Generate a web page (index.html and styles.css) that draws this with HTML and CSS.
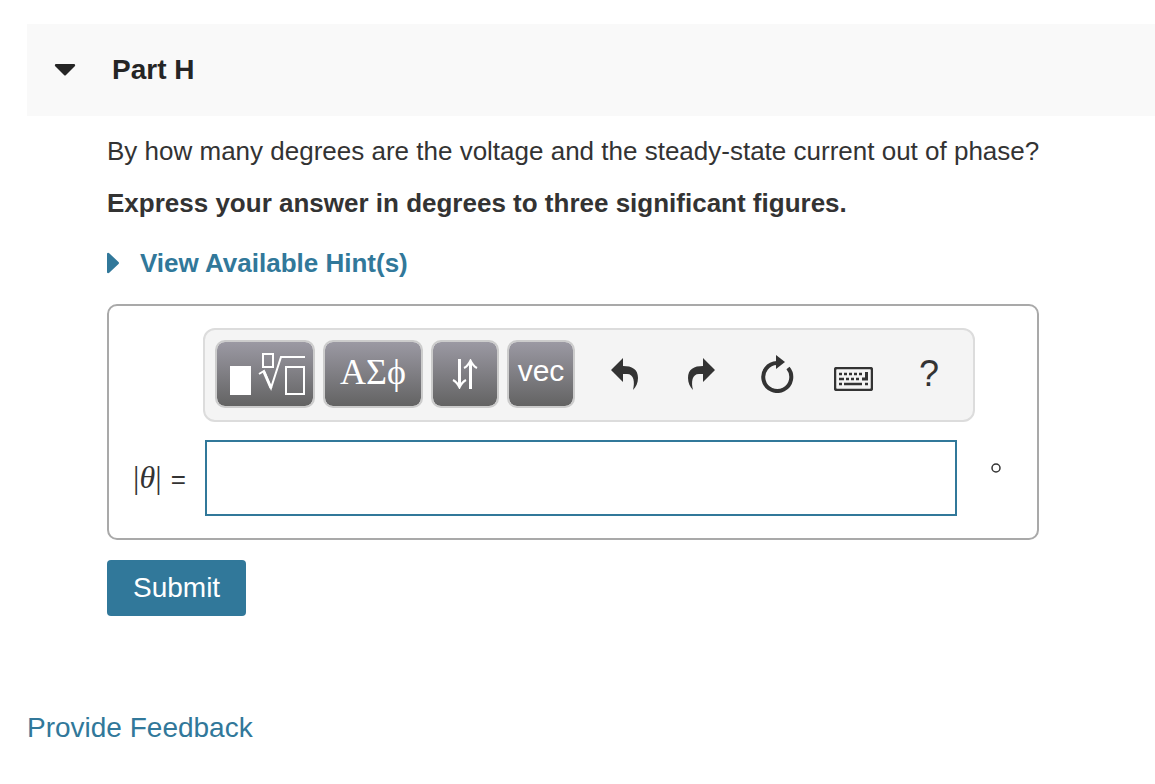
FILE: index.html
```html
<!DOCTYPE html>
<html lang="en">
<head>
    <meta charset="UTF-8">
    <meta name="viewport" content="width=device-width, initial-scale=1.0">
    <title>Part H</title>
    <link rel="stylesheet" href="styles.css">
</head>
<body>
    <header class="part-header">
        <button class="part-toggle" type="button" aria-label="Collapse part" aria-expanded="true">
            <svg width="22" height="14" viewBox="0 0 22 14"><path d="M1.500 1h19q1.500 1 0 2.500L12 12q-1 1-2 0L1.500 3.500Q0 2 1.500 1z" fill="#252525"/></svg>
        </button>
        <h1>Part H</h1>
    </header>
    <main class="part-body">
        <p class="question">By how many degrees are the voltage and the steady-state current out of phase?</p>
        <p class="instructions">Express your answer in degrees to three significant figures.</p>
        <a class="hints" href="#">
            <svg width="13" height="22" viewBox="0 0 13 22"><path d="M0 1.500q1-1.500 2.500 0L11.500 10q1 1 0 2L2.500 20.500q-1.500 1.500-2.500 0z" fill="#31789a"/></svg>
            <span>View Available Hint(s)</span>
        </a>
        <form id="answerForm">
            <div class="answer-box">
                <div class="toolbar">
                    <button class="key key-wide" type="button" aria-label="Templates">
                        <svg width="80" height="44" viewBox="0 0 80 44" fill="none" stroke="#fff" stroke-width="2">
                            <path d="M5 14h21v29H5z" fill="#fff" stroke="none"/>
                            <path d="M38 2h10v13H38z"/>
                            <path d="M61 15h18v27H61z"/>
                            <path d="M34 22l5-3 7 17L56 5h24"/>
                            <path d="M39 20l7 16" stroke-width="3"/>
                        </svg>
                    </button>
                    <button class="key key-wide key-greek" type="button">ΑΣϕ</button>
                    <button class="key" type="button" aria-label="Arrows">
                        <svg width="26" height="30" viewBox="0 0 26 30" fill="none" stroke="#fff" stroke-width="2">
                            <path d="M7.500 0v28M18.500 2v28" stroke-width="3"/>
                            <path d="M1 21q4 2 6.500 7.500q2.500-5.500 6.500-7.500M12 9q4-2 6.500-7.500q2.500 5.500 6.500 7.500"/>
                        </svg>
                    </button>
                    <button class="key key-vec" type="button">vec</button>
                    <div class="tools">
                        <button class="tool" type="button" aria-label="Undo">
                            <svg width="28" height="32" viewBox="0 0 28 32"><path d="M0 12L12 0v8c9 0 15 3 15 12 0 5-2 9-5 12 2-8 1-16-6-16h-4v8z" fill="#333"/></svg>
                        </button>
                        <button class="tool" type="button" aria-label="Redo">
                            <svg width="28" height="32" viewBox="0 0 28 32"><path d="M28 12L16 0v8C7 8 1 11 1 20c0 5 2 9 5 12-2-8-1-16 6-16h4v8z" fill="#333"/></svg>
                        </button>
                        <button class="tool" type="button" aria-label="Reset">
                            <svg width="34" height="38" viewBox="0 0 34 38"><path d="M28 13A14 14 0 1 1 17 8" fill="none" stroke="#333" stroke-width="4"/><path d="M16 0l9 7-9 7z" fill="#333"/></svg>
                        </button>
                        <button class="tool tool-keyboard" type="button" aria-label="Keyboard shortcuts">
                            <svg width="39" height="24" viewBox="0 0 39 24" fill="none" stroke="#333">
                                <rect x="1" y="1" width="37" height="22" rx="2" stroke-width="2.500"/>
                                <path d="M5 7h3M10 7h3M15 7h3M20 7h3M25 7h3M5 12h5M12 12h3M17 12h3M22 12h3M5 17h3M10 17h18M31 17h3" stroke-width="2.500"/>
                                <path d="M32.500 5v7H28" stroke-width="3"/>
                            </svg>
                        </button>
                        <button class="tool tool-help" type="button" aria-label="Help">?</button>
                    </div>
                </div>
                <div class="answer-row">
                    <label for="answer"><span class="math">|<i>θ</i>|</span> =</label>
                    <input id="answer" type="text" autocomplete="off">
                    <span class="unit">
                        <svg width="10" height="10" viewBox="0 0 10 10"><circle cx="5" cy="5" r="4" fill="none" stroke="#333" stroke-width="1.500"/></svg>
                    </span>
                </div>
            </div>
            <button class="submit" type="submit">Submit</button>
        </form>
    </main>
    <footer class="part-footer">
        <a href="#">Provide Feedback</a>
    </footer>
</body>
</html>
```
FILE: styles.css
```css
* {
    box-sizing: border-box;
}
body {
    font-family: "Liberation Sans", Arial, Helvetica, sans-serif;
    font-size: 26px;
    line-height: 32px;
    margin: 0;
    padding: 24px 0 0 27px;
    background: #fff;
    color: #333;
}
a {
    color: #31789a;
    text-decoration: none;
}
button {
    font-family: inherit;
    border: 0;
    padding: 0;
    background: none;
    cursor: pointer;
}
svg {
    display: block;
    flex: none;
}
.part-header {
    display: flex;
    align-items: center;
    gap: 36px;
    padding: 30px 27px;
    background: #f9f9f9;
}
.part-header h1 {
    margin: 0;
    font-size: 28px;
    color: #252525;
}
.part-body {
    padding: 19px 0 0 80px;
}
.question,
.instructions {
    margin: 0 0 20px;
}
.instructions {
    font-weight: bold;
}
.hints {
    display: inline-flex;
    align-items: center;
    gap: 20px;
    margin: 8px 0 25px;
    font-weight: bold;
}
form {
    max-width: 932px;
}
.answer-box {
    padding: 22px 0;
    border: 2px solid #a9a9a9;
    border-radius: 10px;
}
.toolbar {
    display: flex;
    gap: 8px;
    margin: 0 62px 18px 94px;
    padding: 10px 6px 12px 10px;
    border: 2px solid #dcdcdc;
    border-radius: 12px;
    background: #f4f4f4;
}
.key {
    display: flex;
    flex: none;
    align-items: center;
    justify-content: center;
    width: 68px;
    height: 68px;
    border: 2px solid #ccc;
    border-radius: 10px;
    background: linear-gradient(#9b99a3, #636363) padding-box;
    color: #fff;
}
.key-wide {
    width: 100px;
}
.key-greek {
    padding-bottom: 4px;
    font-family: "Liberation Serif", "Times New Roman", serif;
    font-size: 36px;
}
.key-vec {
    padding-bottom: 6px;
    font-size: 30px;
}
.tools {
    display: flex;
    flex: 1;
    margin-left: 4px;
}
.tool {
    display: flex;
    flex: 1;
    align-items: center;
    justify-content: center;
    color: #333;
}
.tool-keyboard {
    padding-top: 10px;
}
.tool-help {
    font-size: 36px;
}
.answer-row {
    display: flex;
    align-items: center;
}
.answer-row label {
    width: 96px;
    padding-left: 24px;
}
.math {
    margin-right: 2px;
    font-family: "Liberation Serif", "Times New Roman", serif;
    font-size: 32px;
}
.answer-row input {
    flex: 1;
    min-width: 0;
    height: 76px;
    padding: 0 16px;
    border: 2px solid #31789a;
    font: inherit;
    color: #333;
    outline: 0;
}
.unit {
    width: 80px;
    padding: 0 0 20px 34px;
}
.submit {
    margin-top: 20px;
    padding: 12px 26px;
    border-radius: 4px;
    background: #31789a;
    color: #fff;
    font-size: 28px;
    line-height: 32px;
}
.part-footer {
    padding: 96px 0 32px;
    font-size: 28px;
}
```
